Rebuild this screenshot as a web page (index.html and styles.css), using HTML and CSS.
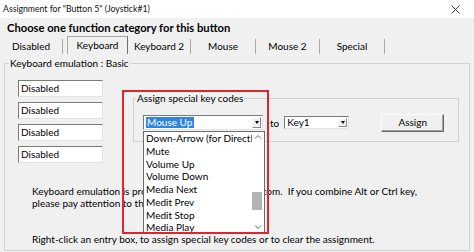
FILE: index.html
```html
<!DOCTYPE html>
<html>
<head>
<meta charset="utf-8">
<link rel="stylesheet" href="styles.css">
</head>
<body>
<div class="window">
  <div class="titlebar">
    <span class="title">Assignment for "Button 5" (Joystick#1)</span>
    <svg class="close" width="9" height="9" viewBox="0 0 9 9"><path d="M0.5 0.5L8.5 8.5M8.5 0.5L0.5 8.5" stroke="#3a3a3a" stroke-width="1"/></svg>
  </div>
  <div class="heading">Choose one function category for this button</div>
  <div class="tabs">
    <div class="tab t1">Disabled</div>
    <div class="tab t2"><span class="active">Keyboard</span></div>
    <div class="tab t3">Keyboard 2</div>
    <div class="tab t4">Mouse</div>
    <div class="tab t5">Mouse 2</div>
    <div class="tab t6">Special</div>
  </div>
  <fieldset class="group main">
    <legend class="legend-main">Keyboard emulation : Basic</legend>
    <div class="row">
      <div class="inputs">
        <div class="entry">Disabled</div>
        <div class="entry">Disabled</div>
        <div class="entry">Disabled</div>
        <div class="entry">Disabled</div>
      </div>
      <fieldset class="group assign">
        <legend class="legend-assign">Assign special key codes</legend>
        <div class="assign-row">
          <div class="combo combo-key">
            <span class="sel">Mouse Up</span>
            <span class="drop"><i class="tri"></i></span>
            <div class="droplist">
              <ul class="items">
                <li>Down-Arrow (for DirectInput)</li>
                <li>Mute</li>
                <li>Volume Up</li>
                <li>Volume Down</li>
                <li>Media Next</li>
                <li>Medit Prev</li>
                <li>Medit Stop</li>
                <li>Media Play</li>
              </ul>
              <div class="scrollbar">
                <svg class="chev" width="12" height="11" viewBox="0 0 12 11"><path d="M3 6.5L6 3.5L9 6.5" fill="none" stroke="#606060" stroke-width="1"/></svg>
                <div class="track"><div class="thumb"></div></div>
                <svg class="chev" width="12" height="11" viewBox="0 0 12 11"><path d="M3 4.5L6 7.5L9 4.5" fill="none" stroke="#606060" stroke-width="1"/></svg>
              </div>
            </div>
          </div>
          <span class="to">to</span>
          <div class="combo combo-target">
            <span class="val">Key1</span>
            <span class="drop"><i class="tri"></i></span>
          </div>
          <button class="btn">Assign</button>
        </div>
      </fieldset>
    </div>
    <p class="note">Keyboard emulation is processed from the top to bottom.&nbsp; If you combine Alt or Ctrl key,<br>please pay attention to the order.</p>
    <p class="hint">Right-click an entry box, to assign special key codes or to clear the assignment.</p>
  </fieldset>
  <div class="highlight"></div>
</div>
</body>
</html>
```
FILE: styles.css
```css
* { box-sizing: border-box; }
html, body { margin: 0; padding: 0; background: #f0f0f0; }
body { font-family: Lato, "Open Sans", sans-serif; font-size: 10px; color: #000; }

.window { position: relative; width: 474px; height: 252px; overflow: hidden; background: #f0f0f0; }

.titlebar { height: 18px; background: #fff; display: flex; align-items: center; justify-content: space-between; padding: 0 14px 0 3px; }
.title { font-size: 8.7px; line-height: 10px; color: #111; }
.close { display: block; margin-top: 1px; }

.heading { margin: 3px 0 0 7px; font-weight: 700; font-size: 11.2px; line-height: 14px; }

.tabs { display: flex; align-items: flex-end; height: 18px; margin-top: 1px; }
.tab { height: 15px; line-height: 15px; text-align: center; border-right: 1px solid #a9a9a9; white-space: nowrap; }
.t1 { width: 63px; }
.t2 { width: 65px; border-right: none; height: 18px; padding-left: 4px; }
.t3 { width: 63px; }
.t4 { width: 65px; }
.t5 { width: 64px; }
.t6 { width: 65px; }
.active { display: block; width: 61px; height: 18px; line-height: 17px; border: 1px solid #a8a8a8; border-right-color: #6e6e6e; border-bottom: none; background: #f0f0f0; }

fieldset.group { margin: 0; padding: 0; border: 1px solid #d2d2d2; min-inline-size: 0; }
.group legend { padding: 0 1px; line-height: 12px; font-size: 10px; }

.main { margin: 3px 0 0 4px !important; width: 466px; height: 194px; padding-top: 11px !important; }
.legend-main { margin-left: 4px; }

.row { display: flex; align-items: flex-start; margin-left: 13px; }
.inputs { display: flex; flex-direction: column; gap: 5px; width: 85px; }
.entry { height: 17px; line-height: 15px; background: #fff; padding-left: 2px; border: 1px solid; border-color: #7a7a7a #e3e3e3 #e3e3e3 #7a7a7a; }

.assign { margin: 12px 0 0 30px !important; width: 326px; height: 50px; padding-top: 11px !important; }
.legend-assign { margin-left: 2px; }
.assign-row { display: flex; align-items: center; height: 15px; padding-left: 9px; }

.combo { position: relative; display: flex; align-items: center; background: #fff; border: 1px solid; border-color: #7a7a7a #e3e3e3 #e3e3e3 #7a7a7a; }
.combo-key { width: 120px; height: 15px; }
.combo-target { width: 65px; height: 13px; }
.sel { margin-left: 2px; padding: 0 2px 0 1px; line-height: 11px; background: #2f86e0; color: #fff; }
.val { padding-left: 2px; line-height: 11px; }
.drop { margin-left: auto; margin-right: 1px; width: 9px; height: 11px; display: flex; align-items: center; justify-content: center; background: #f0f0f0; border: 1px solid; border-color: #fff #8a8a8a #8a8a8a #fff; }
.combo-target .drop { height: 9px; }
.tri { display: block; width: 0; height: 0; border-left: 2.5px solid transparent; border-right: 2.5px solid transparent; border-top: 3px solid #000; }

.to { margin: 0 5px 0 7px; line-height: 12px; }

.btn { margin-left: 32px; width: 63px; height: 18px; padding: 0; font: inherit; font-size: 10px; line-height: 15px; color: #000; background: #f0f0f0; border: 1px solid; border-color: #fdfdfd #6a6a6a #6a6a6a #fdfdfd; box-shadow: inset -1px -1px 0 #a0a0a0; }

.droplist { position: absolute; top: 15px; left: -1px; width: 122px; height: 102px; z-index: 2; background: #fff; border: 1px solid #6c6c6c; display: flex; }
.items { list-style: none; margin: 0; padding: 0; flex: 1; min-width: 0; overflow: hidden; }
.items li { white-space: nowrap; overflow: hidden; line-height: 12.75px; padding-left: 2px; }
.scrollbar { width: 12px; display: flex; flex-direction: column; background: #fff; }
.chev { display: block; flex: none; }
.track { flex: 1; position: relative; }
.thumb { margin: 49px 0 0 0; width: 10px; height: 18px; background: #b4b4b4; }

.note { margin: 22px 0 0 27px; line-height: 12px; white-space: nowrap; }
.hint { margin: 24px 0 0 27px; line-height: 12px; white-space: nowrap; }

.highlight { position: absolute; left: 122px; top: 90px; width: 147px; height: 144px; border: 2px solid #e0252d; z-index: 3; pointer-events: none; }
```
